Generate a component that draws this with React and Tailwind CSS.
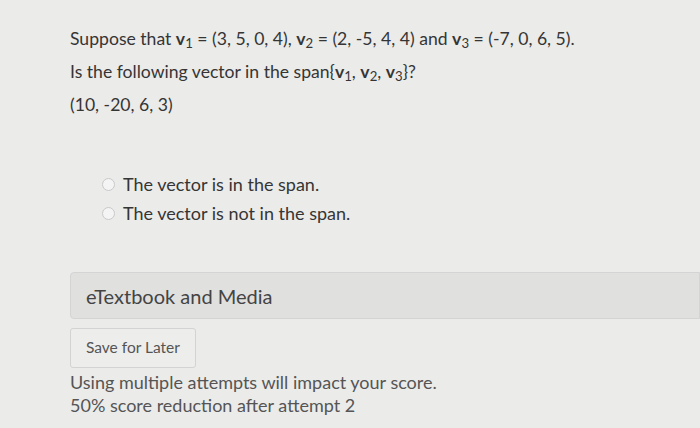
export default function App() {
  return (
    <div className="w-[700px] h-[428px] overflow-hidden bg-[#ebebea] text-[#353535]" style={{ fontFamily: 'Lato, "Open Sans", sans-serif' }}>
      <div className="pl-[70px] pt-[22px]">
        <p className="text-[17.6px] leading-[33px] h-[33px]">
          Suppose that <b className="font-bold">v</b><sub>1</sub> = (3, 5, 0, 4), <b className="font-bold">v</b><sub>2</sub> = (2, -5, 4, 4) and <b className="font-bold">v</b><sub>3</sub> = (-7, 0, 6, 5).
        </p>
        <p className="text-[17.6px] leading-[33px] h-[33px]">
          Is the following vector in the span{'{'}<b className="font-bold">v</b><sub>1</sub>, <b className="font-bold">v</b><sub>2</sub>, <b className="font-bold">v</b><sub>3</sub>{'}'}?
        </p>
        <p className="text-[17.6px] leading-[33px] h-[33px]">(10, -20, 6, 3)</p>

        <div className="mt-[52px] pl-[32px] flex flex-col gap-[7px]">
          {['The vector is in the span.', 'The vector is not in the span.'].map((t) => (
            <label key={t} className="flex items-center gap-[8px] text-[18px] leading-[22px]">
              <span className="w-[13px] h-[13px] rounded-full border border-[#c9c9c9] bg-[#f4f4f4]" />
              {t}
            </label>
          ))}
        </div>

        <div className="mt-[48px] h-[47px] rounded-l-[4px] border border-[#d4d4d4] bg-[#e0e0df] flex items-center pl-[15px] text-[20px] text-[#444]">
          eTextbook and Media
        </div>

        <button className="mt-[9px] h-[40px] px-[15px] rounded-[3px] border border-[#d3d3d3] bg-[#ededec] text-[15.5px] text-[#555]">
          Save for Later
        </button>

        <p className="mt-[3px] text-[18px] leading-[23px] text-[#555]">Using multiple attempts will impact your score.</p>
        <p className="text-[18px] leading-[23px] text-[#555]">50% score reduction after attempt 2</p>
      </div>
    </div>
  );
}
